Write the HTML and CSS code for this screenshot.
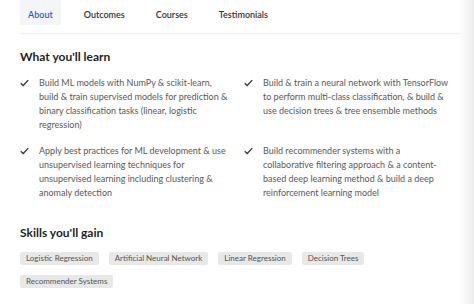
FILE: index.html
```html
<!DOCTYPE html>
<html lang="en">
<head>
  <meta charset="UTF-8" />
  <title>About</title>
  <link rel="stylesheet" href="styles.css">
</head>
<body>
  <div class="page">
    <nav class="tabs">
      <a href="#" class="tab active">About</a>
      <a href="#" class="tab">Outcomes</a>
      <a href="#" class="tab">Courses</a>
      <a href="#" class="tab">Testimonials</a>
    </nav>

    <section class="learn">
      <h2>What you'll learn</h2>
      <ul class="outcomes">
        <li>
          <svg class="check" viewBox="0 0 10 8"><path d="M0.8 4.2 L3.6 6.8 L9.2 0.8" /></svg>
          <span>Build ML models with NumPy &amp; scikit-learn,<br>build &amp; train supervised models for prediction &amp;<br>binary classification tasks (linear, logistic<br>regression)</span>
        </li>
        <li>
          <svg class="check" viewBox="0 0 10 8"><path d="M0.8 4.2 L3.6 6.8 L9.2 0.8" /></svg>
          <span>Build &amp; train a neural network with TensorFlow<br>to perform multi-class classification, &amp; build &amp;<br>use decision trees &amp; tree ensemble methods</span>
        </li>
        <li>
          <svg class="check" viewBox="0 0 10 8"><path d="M0.8 4.2 L3.6 6.8 L9.2 0.8" /></svg>
          <span>Apply best practices for ML development &amp; use<br>unsupervised learning techniques for<br>unsupervised learning including clustering &amp;<br>anomaly detection</span>
        </li>
        <li>
          <svg class="check" viewBox="0 0 10 8"><path d="M0.8 4.2 L3.6 6.8 L9.2 0.8" /></svg>
          <span>Build recommender systems with a<br>collaborative filtering approach &amp; a content-<br>based deep learning method &amp; build a deep<br>reinforcement learning model</span>
        </li>
      </ul>
    </section>

    <section class="skills">
      <h2>Skills you'll gain</h2>
      <div class="tags">
        <span class="tag">Logistic Regression</span>
        <span class="tag">Artificial Neural Network</span>
        <span class="tag">Linear Regression</span>
        <span class="tag">Decision Trees</span>
        <span class="tag">Recommender Systems</span>
      </div>
    </section>
  </div>
</body>
</html>
```

FILE: styles.css
```css
:root {
  --blue: #2d5ec6;
  --text: #1f1f1f;
  --muted: #595959;
  --tag-bg: #e8e8e8;
  --line: #eeeeee;
}

* {
  box-sizing: border-box;
}

body {
  margin: 0;
  font-family: 'Lato', sans-serif;
  color: var(--text);
  background: linear-gradient(to right, #fff 0, #fff 458px, #f6f6f6 466px, #ececec 474px);
  height: 304px;
  overflow: hidden;
}

.page {
  width: 460px;
  padding-left: 20px;
}

.tabs {
  display: flex;
  gap: 15px;
  height: 34px;
  border-bottom: 1px solid var(--line);
}

.tab {
  height: 25px;
  padding: 3px 8px 0;
  display: flex;
  align-items: center;
  font-size: 9px;
  font-weight: 600;
  color: #333;
  text-decoration: none;
}

.tab.active {
  background: #f3f5f9;
  color: var(--blue);
}

h2 {
  margin: 0;
  font-size: 12px;
  line-height: 16px;
  font-weight: 700;
  color: var(--text);
}

.learn {
  padding-top: 15px;
}

.outcomes {
  list-style: none;
  margin: 11px 0 0;
  padding: 0;
  display: grid;
  grid-template-columns: 212px 212px;
  column-gap: 12px;
  row-gap: 12px;
}

.outcomes li {
  display: flex;
  gap: 10px;
  font-size: 9px;
  line-height: 14px;
  color: var(--muted);
  white-space: nowrap;
}

.check {
  flex: none;
  width: 9px;
  height: 8px;
  margin-top: 3px;
  fill: none;
  stroke: #333;
  stroke-width: 1.4;
}

.skills {
  padding-top: 25px;
}

.tags {
  display: flex;
  flex-wrap: wrap;
  gap: 10px;
  margin-top: 11px;
  width: 400px;
}

.tag {
  background: var(--tag-bg);
  color: #555;
  font-size: 8px;
  line-height: 13px;
  padding: 0 6px;
  border-radius: 2px;
}
```
